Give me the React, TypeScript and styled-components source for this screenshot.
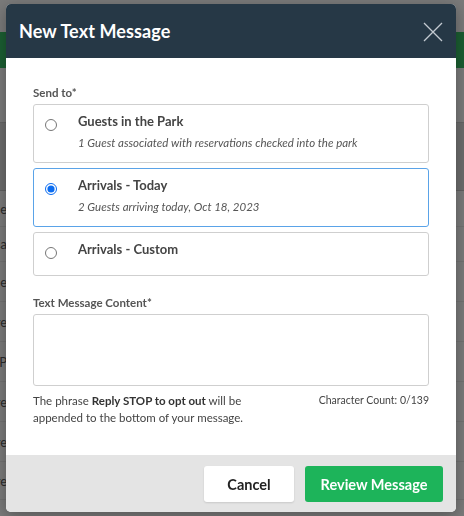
import React, { useState } from "react";
import styled, { createGlobalStyle } from "styled-components";

const GlobalStyle = createGlobalStyle`
  html, body { margin: 0; padding: 0; }
  body {
    font-family: Lato, "Open Sans", "Liberation Sans", sans-serif;
    background: #f4f4f4;
  }
  * { box-sizing: border-box; }
`;

/* ---------- background page ---------- */
const Page = styled.div`
  min-height: 516px;
  background: #f4f4f4;
  display: flex;
  flex-direction: column;
  padding-top: 32px;
`;

const GreenBar = styled.div`
  height: 36px;
  background: #36bc64;
`;

const Toolbar = styled.div`
  height: 55px;
  border-bottom: 1px solid #c8c8c8;
`;

const TableHead = styled.div`
  height: 68px;
  background: #d8d8d8;
  border-bottom: 1px solid #c0c0c0;
`;

const Row = styled.div<{ $h: number }>`
  height: ${(p) => p.$h}px;
  border-bottom: 1px solid #e2e2e2;
  display: flex;
  align-items: center;
`;

const RowCell = styled.div`
  width: 7px;
  display: flex;
  justify-content: flex-end;
  white-space: nowrap;
  font-size: 13px;
  color: #555;
`;

/* ---------- modal ---------- */
const Overlay = styled.div`
  position: fixed;
  inset: 0;
  background: rgba(0, 0, 0, 0.5);
  display: flex;
  justify-content: flex-start;
  align-items: flex-start;
  padding: 4px 0 0 6px;
`;

const Modal = styled.div`
  width: 450px;
  background: #fff;
  border-radius: 5px;
  overflow: hidden;
  box-shadow: 0 4px 16px rgba(0, 0, 0, 0.3);
  display: flex;
  flex-direction: column;
`;

const Header = styled.div`
  height: 54px;
  background: #263846;
  display: flex;
  align-items: center;
  justify-content: space-between;
  padding: 0 13px 0 13px;
`;

const Title = styled.h1`
  margin: 0;
  font-size: 18px;
  font-weight: 700;
  color: #fff;
  letter-spacing: 0.1px;
`;

const CloseButton = styled.button`
  width: 20px;
  height: 22px;
  padding: 0;
  border: 0;
  background: transparent;
  display: flex;
  align-items: center;
  justify-content: center;
  cursor: pointer;
  margin-top: 2px;
`;

const Body = styled.div`
  padding: 28px 27px 29px 27px;
  display: flex;
  flex-direction: column;
`;

const Label = styled.div<{ $top?: number }>`
  font-size: 11.5px;
  line-height: 14px;
  font-weight: 700;
  color: #555;
  margin-top: ${(p) => p.$top ?? 0}px;
  margin-bottom: 4px;
`;

const Options = styled.div`
  display: flex;
  flex-direction: column;
  gap: 5px;
`;

const OptionCard = styled.label<{ $selected: boolean }>`
  display: grid;
  grid-template-columns: 12px 1fr;
  column-gap: 21px;
  align-items: start;
  min-height: 44px;
  padding: 8px 10px 12px 11px;
  border: 1px solid ${(p) => (p.$selected ? "#5aa3e8" : "#cfcfcf")};
  border-radius: 3px;
  cursor: pointer;
`;

const Radio = styled.input`
  width: 12px;
  height: 12px;
  margin: 6px 0 0 0;
  accent-color: #0b6cf0;
`;

const OptionText = styled.div`
  display: flex;
  flex-direction: column;
  gap: 7px;
`;

const OptionTitle = styled.div`
  font-size: 13px;
  line-height: 16px;
  font-weight: 700;
  color: #444;
`;

const OptionSub = styled.div`
  font-size: 11.5px;
  line-height: 14px;
  font-style: italic;
  color: #555;
`;

const TextArea = styled.textarea`
  width: 100%;
  height: 72px;
  border: 1px solid #cfcfcf;
  border-radius: 3px;
  resize: none;
  font-family: inherit;
  font-size: 12px;
  padding: 6px 8px;
  outline: none;
  display: block;
`;

const HelpRow = styled.div`
  display: flex;
  justify-content: space-between;
  align-items: flex-start;
  margin-top: 6px;
`;

const HelpText = styled.div`
  max-width: 235px;
  font-size: 11.5px;
  line-height: 17px;
  color: #444;
  b { font-weight: 700; color: #333; }
`;

const CharCount = styled.div`
  font-size: 10.5px;
  line-height: 17px;
  color: #444;
`;

const Footer = styled.div`
  height: 57px;
  background: #e4e4e4;
  display: flex;
  justify-content: flex-end;
  align-items: flex-start;
  gap: 11px;
  padding: 11px 13px 0 0;
`;

const Button = styled.button<{ $primary?: boolean; $w: number }>`
  width: ${(p) => p.$w}px;
  height: 36px;
  border: 0;
  border-radius: 3px;
  font-family: inherit;
  font-size: 14.5px;
  font-weight: 700;
  cursor: pointer;
  background: ${(p) => (p.$primary ? "#1db45a" : "#fff")};
  color: ${(p) => (p.$primary ? "#fff" : "#222")};
  box-shadow: ${(p) => (p.$primary ? "none" : "0 1px 2px rgba(0,0,0,0.12)")};
`;

const rows: { h: number; t: string }[] = [
  { h: 36, t: "Type" },
  { h: 35, t: "Ca" },
  { h: 40, t: "Sale" },
  { h: 40, t: "Are" },
  { h: 40, t: "SP" },
  { h: 40, t: "Are" },
  { h: 40, t: "Are" },
  { h: 38, t: "Are" },
];

const options = [
  {
    id: "park",
    title: "Guests in the Park",
    sub: "1 Guest associated with reservations checked into the park",
  },
  {
    id: "today",
    title: "Arrivals - Today",
    sub: "2 Guests arriving today, Oct 18, 2023",
  },
  { id: "custom", title: "Arrivals - Custom", sub: "" },
];

export default function App() {
  const [sel, setSel] = useState("today");
  const [msg, setMsg] = useState("");

  return (
    <>
      <GlobalStyle />
      <Page>
        <GreenBar />
        <Toolbar />
        <TableHead />
        {rows.map((r, i) => (
          <Row key={i} $h={r.h}>
            <RowCell>{r.t}</RowCell>
          </Row>
        ))}
      </Page>
      <Overlay>
        <Modal>
          <Header>
            <Title>New Text Message</Title>
            <CloseButton aria-label="Close">
              <svg width="20" height="20" viewBox="0 0 20 20">
                <path
                  d="M1 1 L19 19 M19 1 L1 19"
                  stroke="#c3cad1"
                  strokeWidth="1.3"
                  fill="none"
                />
              </svg>
            </CloseButton>
          </Header>
          <Body>
            <Label>Send to*</Label>
            <Options>
              {options.map((o) => (
                <OptionCard key={o.id} $selected={sel === o.id}>
                  <Radio
                    type="radio"
                    name="sendto"
                    checked={sel === o.id}
                    onChange={() => setSel(o.id)}
                  />
                  <OptionText>
                    <OptionTitle>{o.title}</OptionTitle>
                    {o.sub && <OptionSub>{o.sub}</OptionSub>}
                  </OptionText>
                </OptionCard>
              ))}
            </Options>
            <Label $top={20}>Text Message Content*</Label>
            <TextArea value={msg} onChange={(e) => setMsg(e.target.value)} />
            <HelpRow>
              <HelpText>
                The phrase <b>Reply STOP to opt out</b> will be appended to the
                bottom of your message.
              </HelpText>
              <CharCount>Character Count: {msg.length}/139</CharCount>
            </HelpRow>
          </Body>
          <Footer>
            <Button $w={90}>Cancel</Button>
            <Button $primary $w={138}>
              Review Message
            </Button>
          </Footer>
        </Modal>
      </Overlay>
    </>
  );
}
